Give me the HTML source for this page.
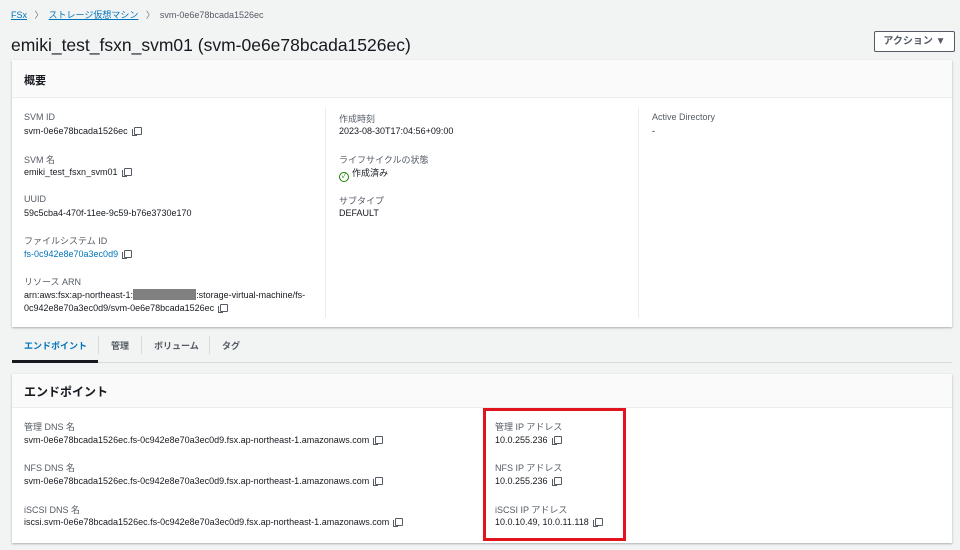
<!DOCTYPE html>
<html><head><meta charset="utf-8"><style>
*{box-sizing:border-box;margin:0;padding:0}
body{width:960px;height:550px;overflow:hidden;background:#f2f3f3;font-family:"Liberation Sans","Noto Sans CJK JP",sans-serif;color:#16191f;position:relative}
.a{position:absolute;white-space:nowrap}
.lbl{font-size:9px;color:#545b64}
.val{font-size:9px;color:#16191f}
.link{color:#0073bb}
.card{position:absolute;left:12px;width:940px;background:#fff;box-shadow:0 1px 2px rgba(0,28,36,.3)}
.hd{position:absolute;left:0;top:0;width:100%;background:#fafafa;border-bottom:1px solid #eaeded}
.cp{display:inline-block;width:8px;height:8px;border:1.3px solid #545b64;border-radius:1px;margin-left:6px;vertical-align:-1px;position:relative}
.cp:before{content:"";position:absolute;left:-3px;top:1px;width:4px;height:6px;border-left:1.3px solid #545b64;border-bottom:1.3px solid #545b64}
.vd{position:absolute;width:1px;background:#eaeded}
</style></head><body>
<div class="a" style="left:11px;top:8px;font-size:9px"><span class="link" style="text-decoration:underline">FSx</span> <span style="color:#687078;margin:0 5px">〉</span><span class="link" style="text-decoration:underline">ストレージ仮想マシン</span> <span style="color:#687078;margin:0 5px">〉</span><span style="color:#545b64">svm-0e6e78bcada1526ec</span></div>
<div class="a" style="left:11px;top:35px;font-size:17.5px">emiki_test_fsxn_svm01 (svm-0e6e78bcada1526ec)</div>
<div class="a" style="left:874px;top:31px;width:81px;height:21px;border:1px solid #545b64;border-radius:2px;background:#fff;font-size:10px;font-weight:bold;color:#545b64;text-align:center;line-height:19px">アクション ▼</div>

<div class="card" style="top:60px;height:267px">
<div class="hd" style="height:38px"><div class="a" style="left:12px;top:12px;font-size:11px;font-weight:bold">概要</div></div>
<div class="vd" style="left:313px;top:48px;height:210px"></div>
<div class="vd" style="left:626px;top:48px;height:210px"></div>
<div class="a lbl" style="left:12px;top:52px">SVM ID</div>
<div class="a val" style="left:12px;top:66px">svm-0e6e78bcada1526ec<span class="cp"></span></div>
<div class="a lbl" style="left:12px;top:93px">SVM 名</div>
<div class="a val" style="left:12px;top:107px">emiki_test_fsxn_svm01<span class="cp"></span></div>
<div class="a lbl" style="left:12px;top:134px">UUID</div>
<div class="a val" style="left:12px;top:148px">59c5cba4-470f-11ee-9c59-b76e3730e170</div>
<div class="a lbl" style="left:12px;top:174px">ファイルシステム ID</div>
<div class="a val link" style="left:12px;top:189px">fs-0c942e8e70a3ec0d9<span class="cp"></span></div>
<div class="a lbl" style="left:12px;top:215px">リソース ARN</div>
<div class="a val" style="left:12px;top:229px">arn:aws:fsx:ap-northeast-1:<span style="display:inline-block;width:63px;height:11px;background:#808080;vertical-align:-2px"></span>:storage-virtual-machine/fs-</div>
<div class="a val" style="left:12px;top:243px">0c942e8e70a3ec0d9/svm-0e6e78bcada1526ec<span class="cp"></span></div>
<div class="a lbl" style="left:327px;top:52px">作成時刻</div>
<div class="a val" style="left:327px;top:66px">2023-08-30T17:04:56+09:00</div>
<div class="a lbl" style="left:327px;top:93px">ライフサイクルの状態</div>
<div class="a val" style="left:327px;top:106px"><span style="display:inline-block;width:10px;height:10px;border:1.3px solid #1d8102;border-radius:50%;vertical-align:-2px;margin-right:3px;font-size:7px;line-height:7px;text-align:center;color:#1d8102">✓</span>作成済み</div>
<div class="a lbl" style="left:327px;top:134px">サブタイプ</div>
<div class="a val" style="left:327px;top:148px">DEFAULT</div>
<div class="a lbl" style="left:640px;top:52px">Active Directory</div>
<div class="a val" style="left:640px;top:66px">-</div>
</div>

<div class="a" style="left:12px;top:362px;width:940px;height:1px;background:#d5dbdb"></div>
<div class="a" style="left:12px;top:360px;width:86px;height:3px;background:#16191f"></div>
<div class="a" style="left:24px;top:339px;font-size:9px;font-weight:bold;color:#0073bb">エンドポイント</div>
<div class="a" style="left:98px;top:336px;width:1px;height:18px;background:#d5dbdb"></div>
<div class="a" style="left:111px;top:339px;font-size:9px;font-weight:bold;color:#545b64">管理</div>
<div class="a" style="left:141px;top:336px;width:1px;height:18px;background:#d5dbdb"></div>
<div class="a" style="left:154px;top:339px;font-size:9px;font-weight:bold;color:#545b64">ボリューム</div>
<div class="a" style="left:209px;top:336px;width:1px;height:18px;background:#d5dbdb"></div>
<div class="a" style="left:222px;top:339px;font-size:9px;font-weight:bold;color:#545b64">タグ</div>

<div class="card" style="top:374px;height:169px">
<div class="hd" style="height:34px"><div class="a" style="left:12px;top:9px;font-size:12px;font-weight:bold">エンドポイント</div></div>
<div class="a lbl" style="left:12px;top:46px">管理 DNS 名</div>
<div class="a val" style="left:12px;top:61px">svm-0e6e78bcada1526ec.fs-0c942e8e70a3ec0d9.fsx.ap-northeast-1.amazonaws.com<span class="cp"></span></div>
<div class="a lbl" style="left:12px;top:87px">NFS DNS 名</div>
<div class="a val" style="left:12px;top:102px">svm-0e6e78bcada1526ec.fs-0c942e8e70a3ec0d9.fsx.ap-northeast-1.amazonaws.com<span class="cp"></span></div>
<div class="a lbl" style="left:12px;top:129px">iSCSI DNS 名</div>
<div class="a val" style="left:12px;top:143px">iscsi.svm-0e6e78bcada1526ec.fs-0c942e8e70a3ec0d9.fsx.ap-northeast-1.amazonaws.com<span class="cp"></span></div>
<div class="a lbl" style="left:483px;top:46px">管理 IP アドレス</div>
<div class="a val" style="left:483px;top:61px">10.0.255.236<span class="cp"></span></div>
<div class="a lbl" style="left:483px;top:87px">NFS IP アドレス</div>
<div class="a val" style="left:483px;top:102px">10.0.255.236<span class="cp"></span></div>
<div class="a lbl" style="left:483px;top:129px">iSCSI IP アドレス</div>
<div class="a val" style="left:483px;top:143px">10.0.10.49, 10.0.11.118<span class="cp"></span></div>
</div>
<div class="a" style="left:483px;top:408px;width:143px;height:133px;border:3px solid #e0141e"></div>
</body></html>
